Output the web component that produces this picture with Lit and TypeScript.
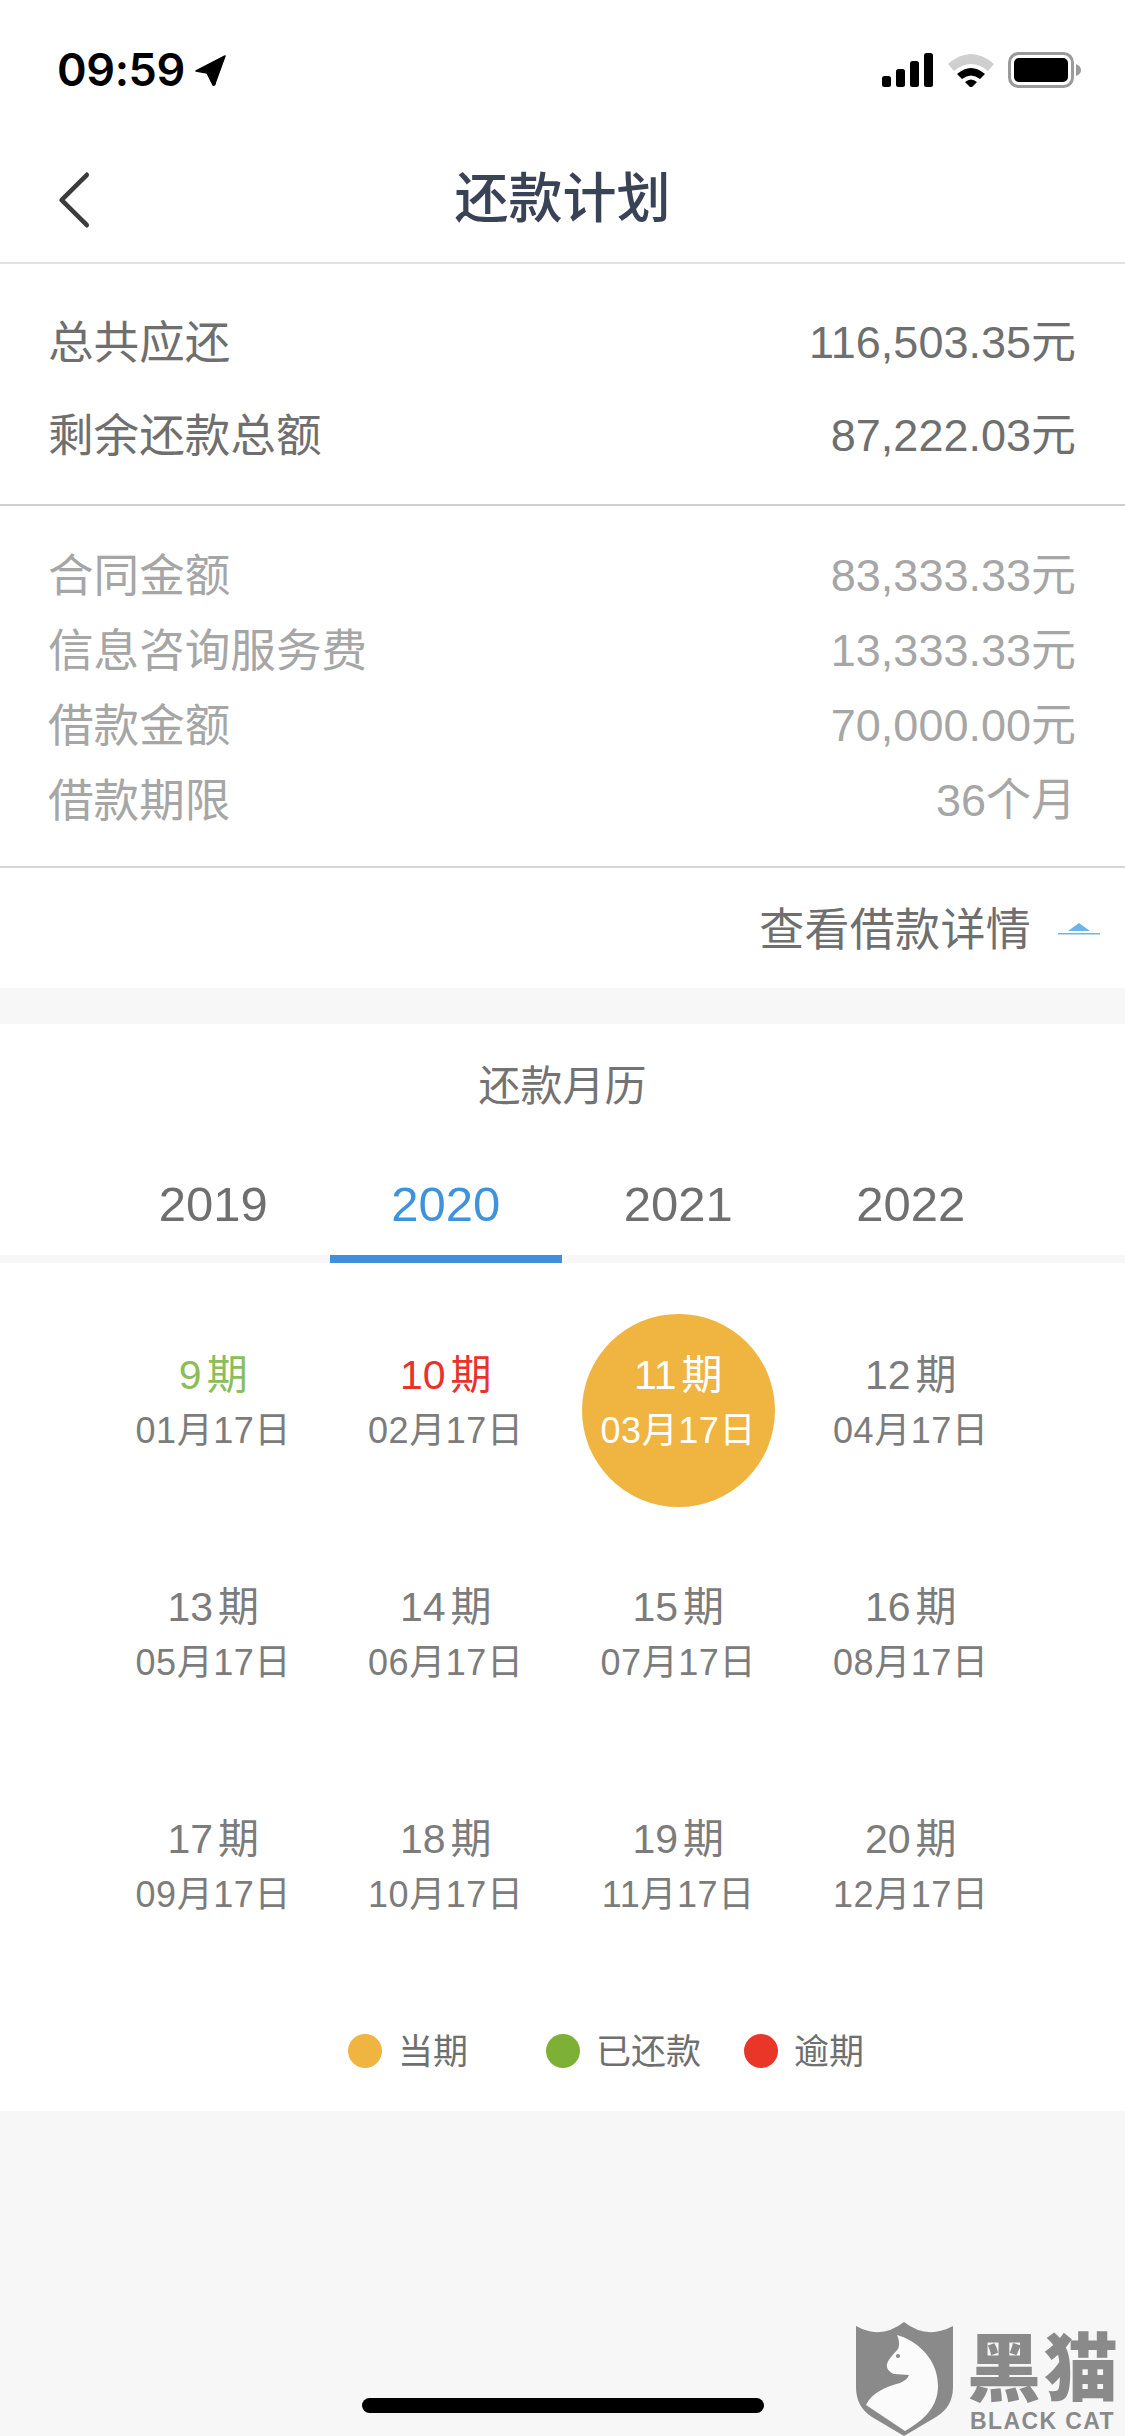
import { LitElement, html, css, svg } from "lit";
import { customElement } from "lit/decorators.js";

const periods = [
  ["9", "01月17日", "paid"], ["10", "02月17日", "late"], ["11", "03月17日", "now"], ["12", "04月17日", ""],
  ["13", "05月17日", ""], ["14", "06月17日", ""], ["15", "07月17日", ""], ["16", "08月17日", ""],
  ["17", "09月17日", ""], ["18", "10月17日", ""], ["19", "11月17日", ""], ["20", "12月17日", ""],
];

@customElement("app-root")
export class AppRoot extends LitElement {
  static styles = css`
    :host { display: block; width: 1125px; height: 2436px; background: #f7f7f7; position: relative; overflow: hidden;
      font-family: "Liberation Sans", "Noto Sans CJK SC", sans-serif; color: #6b6b6b; }
    * { box-sizing: border-box; }
    .status { height: 132px; padding: 52px 43px 0 57px; display: flex; align-items: flex-start; justify-content: space-between; background: #fff; }
    .time { display: flex; align-items: center; gap: 9px; font: 600 45px/36px Inter, sans-serif; color: #000; letter-spacing: -0.4px; }
    .sys { display: flex; align-items: center; gap: 13px; height: 36px; }
    .nav { height: 132px; display: flex; align-items: center; justify-content: center; position: relative; background: #fff; border-bottom: 2px solid #e2e2e2; padding-bottom: 5px; }
    .nav h1 { margin: 0; font: 500 54px/1 "Noto Sans CJK SC", sans-serif; color: #3a4256; }
    .back { position: absolute; left: 55px; top: 39px; }
    .sum { padding: 28px 49px 26px 48px; border-bottom: 2px solid #cfcfcf; background: #fff; }
    .row { display: flex; justify-content: space-between; align-items: center; height: 93px; font-size: 45px; color: #6f6f6f; }
    .row .label { font-size: 45.6px; }
    .detail { padding: 28px 49px 32px 48px; border-bottom: 2px solid #d6d6d6; background: #fff; }
    .detail .row { height: 75px; color: #a6a6a6; }
    .link { height: 120px; padding: 0 25px 3px 0; display: flex; align-items: center; justify-content: flex-end; gap: 27px; font-size: 45px; letter-spacing: 0.3px; color: #6f6f6f; background: #fff; }
    .link svg { margin-top: 3px; }
    .band { height: 36px; }
    .cal { background: #fff; height: 1087px; }
    .cal-title { height: 130px; display: flex; align-items: center; justify-content: center; font-size: 42px; color: #737373; padding-bottom: 14px; }
    .tabs { height: 109px; padding: 0 97px; display: grid; grid-template-columns: repeat(4, 232.5px); border-bottom: 8px solid #f7f7f7; }
    .tab { position: relative; display: flex; align-items: center; justify-content: center; padding-bottom: 2px; font-size: 49px; color: #6f6f6f; }
    .tab.on { color: #3f93dc; }
    .tab.on::after { content: ""; position: absolute; left: 0; right: 0; bottom: -8px; height: 8px; background: #3f8fdc; }
    .grid { padding: 32px 97px 0; display: grid; grid-template-columns: repeat(4, 232.5px); grid-auto-rows: 232px; }
    .cell { display: flex; align-items: center; justify-content: center; }
    .disc { width: 193px; height: 193px; margin-top: -2px; padding-bottom: 17px; border-radius: 50%; display: flex; flex-direction: column; align-items: center; justify-content: center; gap: 12px; color: #7c7c7c; white-space: nowrap; }
    .p { font-size: 41px; line-height: 46px; display: flex; gap: 5px; }
    .d { font-size: 36px; line-height: 42px; letter-spacing: 0.6px; }
    .paid .p { color: #8bbd5a; }
    .late .p { color: #e8322b; }
    .now { background: #f0b441; color: #fff; }
    .legend { display: grid; grid-template-columns: repeat(3, 198px); height: 120px; padding: 0 0 0 348px; align-items: center; font-size: 35px; color: #6f6f6f; }
    .li { display: flex; align-items: center; gap: 16px; }
    .li span:last-child { position: relative; top: -3px; }
    .dot { width: 34px; height: 34px; border-radius: 50%; }
    .home { position: absolute; left: 362px; top: 2398px; width: 402px; height: 15px; border-radius: 8px; background: #000; }
    .mark { position: absolute; left: 856px; top: 2322px; display: flex; gap: 14px; color: #8a8a8a; }
    .mark-text { display: flex; flex-direction: column; width: 156px; }
    .cn { font: 900 74px/62px "Noto Sans CJK SC", sans-serif; letter-spacing: 3px; white-space: nowrap; margin-top: 10px; }
    .en { font: 700 23px/24px "Liberation Sans", sans-serif; letter-spacing: 1.4px; white-space: nowrap; margin-top: 15px; margin-left: 3px; }
  `;

  render() {
    return html`
      <div class="status">
        <div class="time">09:59
          <svg width="33" height="33" viewBox="0 0 33 33"><path d="M31 2 L2 17 L13 19 L19 31 Q21 32 21.5 28 Z" fill="#000" stroke="#000" stroke-width="1.5" stroke-linejoin="round"/></svg>
        </div>
        <div class="sys">
          <svg width="52" height="34" viewBox="0 0 52 34" fill="#000"><rect x="0" y="23" width="9" height="11" rx="2.5"/><rect x="14" y="16" width="9" height="18" rx="2.5"/><rect x="28" y="8" width="9" height="26" rx="2.5"/><rect x="42" y="0" width="9" height="34" rx="2.5"/></svg>
          <svg width="48" height="34" viewBox="0 0 48 34"><path d="M1 11 Q24 -9 47 11 L41 18 Q24 4 7 18 Z" fill="#cfcfcf"/><path d="M10 21 Q24 9 38 21 L33 26 Q24 19 15 26 Z M18 29 Q24 24 30 29 L24 35 Z" fill="#000"/></svg>
          <svg width="74" height="36" viewBox="0 0 74 36"><rect x="1.5" y="1.5" width="63" height="33" rx="9" fill="none" stroke="#9a9a9a" stroke-width="3"/><rect x="6" y="6" width="54" height="24" rx="5" fill="#000"/><path d="M68 12 Q73 14 73 18 Q73 22 68 24 Z" fill="#9a9a9a"/></svg>
        </div>
      </div>
      <div class="nav">
        <svg class="back" width="36" height="58" viewBox="0 0 36 58"><path d="M32 4 L4 29 L32 54" fill="none" stroke="#3c3c3c" stroke-width="5" stroke-linecap="round" stroke-linejoin="round" transform="translate(3 0) scale(0.9 1)"/></svg>
        <h1>还款计划</h1>
      </div>
      <div class="sum">
        <div class="row"><span class="label">总共应还</span><span>116,503.35元</span></div>
        <div class="row"><span class="label">剩余还款总额</span><span>87,222.03元</span></div>
      </div>
      <div class="detail">
        <div class="row"><span class="label">合同金额</span><span>83,333.33元</span></div>
        <div class="row"><span class="label">信息咨询服务费</span><span>13,333.33元</span></div>
        <div class="row"><span class="label">借款金额</span><span>70,000.00元</span></div>
        <div class="row"><span class="label">借款期限</span><span>36个月</span></div>
      </div>
      <div class="link">
        <span>查看借款详情</span>
        <svg width="42" height="14" viewBox="0 0 42 14"><path d="M10 10 L21 2 L32 10 Z" fill="#6bb5ea"/><rect x="0" y="12" width="42" height="1.5" fill="#6bb5ea"/></svg>
      </div>
      <div class="band"></div>
      <div class="cal">
        <div class="cal-title">还款月历</div>
        <div class="tabs">
          <div class="tab">2019</div><div class="tab on">2020</div><div class="tab">2021</div><div class="tab">2022</div>
        </div>
        <div class="grid">
          ${periods.map(([p, d, c]) => html`<div class="cell"><div class="disc ${c}"><div class="p"><span>${p}</span><span>期</span></div><div class="d">${d}</div></div></div>`)}
        </div>
        <div class="legend">
          <div class="li"><span class="dot" style="background:#f0b441"></span><span>当期</span></div>
          <div class="li"><span class="dot" style="background:#7cb135"></span><span>已还款</span></div>
          <div class="li"><span class="dot" style="background:#e93628"></span><span>逾期</span></div>
        </div>
      </div>
      <div class="mark">
        <svg width="97" height="114" viewBox="0 0 97 114">
          ${svg`<path d="M0,4 Q25,18 48,0 Q71,18 97,4 L97,65 Q97,85 80,95 L48,114 L16,95 Q0,85 0,65 Z" fill="#8a8a8a"/>
          <path d="M41,13 L47,15 C68,24 82,42 82,64 C82,85 68,98 49,109 L10,83 C16,70 30,65 44,61 C49,59 52,56 53,53 L38,52 C33,50 30,46 31,42 C33,36 38,32 42,27 C44,22 43,18 41,13 Z" fill="#fbfbfb"/>
          <circle cx="42" cy="34" r="2" fill="#8a8a8a"/>`}
        </svg>
        <div class="mark-text"><div class="cn">黑猫</div><div class="en">BLACK CAT</div></div>
      </div>
      <div class="home"></div>
    `;
  }
}
